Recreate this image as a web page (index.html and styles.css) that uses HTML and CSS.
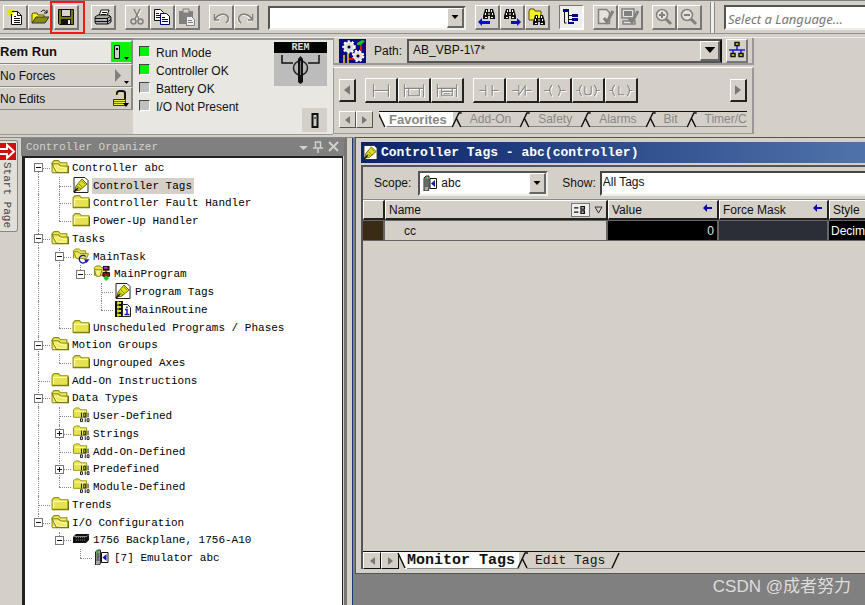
FILE: index.html
```html
<!DOCTYPE html>
<html lang="en">
<head>
<meta charset="utf-8">
<title>Controller abc</title>
<link rel="stylesheet" href="styles.css">
</head>
<body>
<svg class="defs" aria-hidden="true">
  <symbol id="fopen" viewBox="0 0 17 14"><path d="M1 12V3l2-2h4l2 2h6v3" fill="#f0ec60" stroke="#8c8c10"/><path d="M1 4l4 8h11V6H9L7 4z" fill="#eeea66" stroke="#85850c"/><path d="M3 6l3 5M6 6l9 3M7 11h8" stroke="#fffcb0"/><path d="M1 12.5h15.5V6" fill="none" stroke="#6f6f08"/></symbol>
  <symbol id="fclosed" viewBox="0 0 17 14"><path d="M1 12V3l2-2h4l2 2h7v9z" fill="#e6e252" stroke="#92920f"/><path d="M2 4.500h13M2.500 5v6" stroke="#fffcae"/><path d="M1 12.500h15.500V4" fill="none" stroke="#6f6f08"/></symbol>
  <symbol id="fdata" viewBox="0 0 18 17"><path d="M1 11V3l2-2h4l2 2h6v8z" fill="#e6e252" stroke="#92920f"/><path d="M2 4.500h12" stroke="#fffcae"/><path d="M9.500 6v5M12 6.500h2v4h-2zM16.500 6v5M8.500 12.500h2v3h-2zM13.500 12v4M15.500 12.500h2v3h-2z" fill="none" stroke="#111"/></symbol>
  <symbol id="ftask" viewBox="0 0 18 17"><path d="M1 11V3l2-2h4l2 2h5v3" fill="#e6e252" stroke="#92920f"/><path d="M1 4l3 7h11l2-5H8L6 4z" fill="#eeea66" stroke="#85850c"/><path d="M14 9a4 4 0 1 0 1 4" fill="none" stroke="#1a1a9c" stroke-width="1.500"/><path d="M12 12h6l-3 4z" fill="#1a1a9c"/></symbol>
  <symbol id="fprog" viewBox="0 0 18 17"><path d="M1 11V3l2-2h4l2 2h5v8z" fill="#e6e252" stroke="#85850c"/><path d="M1 5h8l-2 7H3z" fill="#f2ef80" stroke="#85850c"/><path d="M10 1h7v5h-7z" fill="#111"/><path d="M11 2h4v2h-4z" fill="#e01fe0"/><path d="M13 6v3M10 8h7v4h-7z" fill="#a01010" stroke="#111"/><path d="M13.500 11l3 3-3 3-3-3z" fill="#15d015"/></symbol>
  <symbol id="tag" viewBox="0 0 16 16"><path d="M1 .5h11l3 3v12H1z" fill="#fff" stroke="#222"/><path d="M2 14l1-5 6-7 5 5-7 6z" fill="#dede20" stroke="#66660a"/><path d="M6 7l4 4M4 9l4 3M9 4l3 3" stroke="#8c8c10"/><path d="M1 15l4-4" stroke="#111" stroke-width="1.500"/></symbol>
  <symbol id="routine" viewBox="0 0 16 16"><path d="M0 0h8v16H0z" fill="#111"/><path d="M2 1h4v2H2zM2 5h4v2H2zM2 9h4v2H2zM2 13h4v2H2z" fill="#d8d820"/><path d="M3 0v16" stroke="#d8d820"/><path d="M7.500 3.500h5l3 3v9h-8z" fill="#fff" stroke="#222"/><path d="M10 8.500h2V13M9.500 13.500h5M12 5.500V7" stroke="#1717c8" stroke-width="1.500" fill="none"/></symbol>
  <symbol id="rack" viewBox="0 0 18 12"><path d="M1 10V4l3-3h13v6l-3 3z" fill="#111"/><path d="M4 4.500h10M4 7h9" stroke="#777" stroke-dasharray="1 1"/><path d="M2 3.500h13l2-2" stroke="#888" fill="none"/></symbol>
  <symbol id="module" viewBox="0 0 15 16"><path d="M1 3l2-2h3v13l-1 2H1z" fill="#aaa" stroke="#222"/><path d="M2 5h3M2 7h3M2 9h3M2 11h3" stroke="#222"/><path d="M2 2h2v2H2z" fill="#17c317"/><path d="M7 3.500h6.500v10H7z" fill="#fff" stroke="#111"/><path d="M12 5v7L8 8.500z" fill="#1717a8"/></symbol>
  <symbol id="new" viewBox="0 0 18 18"><path d="M5.500 3.500h6l4 4v9h-10z" fill="#fff" stroke="#111"/><path d="M11.500 3.500v4h4M8 8.500h2M8 10.500h6M8 12.500h6M8 14.500h6" fill="none" stroke="#111"/><path d="M4.500 1v7M1 4.500h7M2 2l5 5M7 2L2 7" stroke="#e0dc00"/></symbol>
  <symbol id="open" viewBox="0 0 18 18"><path d="M1 15V6l1-1h4l1 2h6v3" fill="#f4f020" stroke="#555500"/><path d="M1 15l4-6h13l-4 6z" fill="#8a8a10" stroke="#333"/><path d="M10 4c2-3 4-2 6 1M16 2v3h-3" stroke="#111" fill="none"/></symbol>
  <symbol id="save" viewBox="0 0 18 18"><path d="M1.500 1.500h15v15h-14l-1-1z" fill="#77770c" stroke="#111"/><path d="M4.500 1.500h9v7h-9z" fill="#d8d5ce" stroke="#111"/><path d="M4 11h10v6H4z" fill="#111"/><path d="M11 12h2v4h-2z" fill="#eee"/></symbol>
  <symbol id="print" viewBox="0 0 18 18"><path d="M5 8l2-6h8l-2 6" fill="#fff" stroke="#111"/><path d="M8 4.500h5M7 6.500h5" stroke="#111"/><path d="M1 9l3-2h11l2 2v5l-3 2H2l-1-2z" fill="#aaa" stroke="#111"/><path d="M1 10.500h12l3-2M1 13.500h13l3-2M13.500 10v6" fill="none" stroke="#111"/><path d="M9 11h3v1H9z" fill="#e6e020"/></symbol>
  <symbol id="cut" viewBox="0 0 18 18"><g fill="none" stroke="#fff" transform="translate(1 1)"><path d="M6 1l5 10M12 1l-5 10"/></g><g fill="none" stroke="#808080" stroke-width="1.500"><path d="M6 1l5 10M12 1l-5 10"/><circle cx="5.500" cy="13.500" r="2.500"/><circle cx="12.500" cy="13.500" r="2.500"/></g></symbol>
  <symbol id="copy" viewBox="0 0 18 18"><path d="M1.500 1.500h6l3 3v8h-9z" fill="#fff" stroke="#111"/><path d="M3 5.500h3M3 7.500h5M3 9.500h5" stroke="#111"/><path d="M7.500 5.500h6l3 3v8h-9z" fill="#fff" stroke="#00007c"/><path d="M9 9.500h3M9 11.500h6M9 13.500h6" stroke="#00007c"/></symbol>
  <symbol id="paste" viewBox="0 0 18 18"><path d="M1 3h14v13H1z" fill="#808080"/><path d="M5 1h6v4H5z" fill="#d4d0c8" stroke="#808080"/><path d="M8.500 8.500h5l3 3v6h-8z" fill="#eee" stroke="#808080"/><path d="M10 12.500h4M10 14.500h5" stroke="#808080"/></symbol>
  <symbol id="undo" viewBox="0 0 18 18"><path d="M2 12h5M2.500 12V6M3 11c4-6 11-6 13-2 1 3 0 4-2 6" fill="none" stroke="#fff" transform="translate(1 1)"/><path d="M2 12h5M2.500 12V6M3 11c4-6 11-6 13-2 1 3 0 4-2 6" fill="none" stroke="#808080" stroke-width="1.500"/></symbol>
  <symbol id="bino" viewBox="0 0 12 12"><path d="M2 1h3v3h2V1h3l2 7v3H7V8H5v3H0V8z" fill="#111"/><path d="M3.500 2v2M8.500 2v2M2 9.500h2M8 9.500h2M6 5v2M2.500 5v2M9.500 5v2" stroke="#fff"/></symbol>
  <symbol id="findp" viewBox="0 0 18 18"><use href="#bino" x="5" width="12" height="12"/><path d="M0 14l4-4v3h8v3H4v2z" fill="#0808d8"/></symbol>
  <symbol id="findn" viewBox="0 0 18 18"><use href="#bino" x="1" width="12" height="12"/><path d="M18 14l-4-4v3H8v3h6v2z" fill="#0808d8"/></symbol>
  <symbol id="findf" viewBox="0 0 18 18"><path d="M1 12V3l1-2h4l1 2h6v9z" fill="#f4f020" stroke="#555500"/><use href="#bino" x="5" y="6" width="12" height="12"/></symbol>
  <symbol id="treeic" viewBox="0 0 18 18"><path d="M6.500 3v12M6.500 7.500h4M6.500 11.500h4M6.500 15h3M2.500 3v12h2" fill="none" stroke="#111"/><path d="M1 1h6v3H1zM10 6h6v3h-6zM10 10h6v3h-6zM6 14h6v2H6z" fill="#00008c"/></symbol>
  <symbol id="verify1" viewBox="0 0 18 18"><path d="M2.500 1.500h8l3 3v11h-11z" fill="#e5e2dc" stroke="#808080" stroke-width="1.500"/><path d="M8 10l3 4 6-11" fill="none" stroke="#808080" stroke-width="3"/></symbol>
  <symbol id="verify2" viewBox="0 0 18 18"><path d="M1 1h12v9H1zM2 13h12v3H2z" fill="#e5e2dc" stroke="#808080" stroke-width="1.500"/><path d="M3 3h8v5H3z" fill="#808080"/><path d="M8 10l3 4 6-11" fill="none" stroke="#808080" stroke-width="3"/></symbol>
  <symbol id="zin" viewBox="0 0 18 18"><circle cx="7" cy="7" r="5.500" fill="#e5e2dc" stroke="#808080" stroke-width="1.500"/><path d="M4 7h6M7 4v6" stroke="#808080" stroke-width="2"/><path d="M11 11l5 5" stroke="#808080" stroke-width="3"/></symbol>
  <symbol id="zout" viewBox="0 0 18 18"><circle cx="7" cy="7" r="5.500" fill="#e5e2dc" stroke="#808080" stroke-width="1.500"/><path d="M4 7h6" stroke="#808080" stroke-width="2"/><path d="M11 11l5 5" stroke="#808080" stroke-width="3"/></symbol>
  <symbol id="down" viewBox="0 0 7 4"><path d="M0 0h7L3.500 4z"/></symbol>
  <symbol id="left" viewBox="0 0 5 8"><path d="M5 0v8L0 4z"/></symbol>
  <symbol id="right" viewBox="0 0 5 8"><path d="M0 0v8l5-4z"/></symbol>
  <symbol id="back" viewBox="0 0 9 8"><path d="M0 4l4-4v3h5v2H4v3z" fill="#0808b8"/></symbol>
  <symbol id="cross" viewBox="0 0 12 17"><path d="M1 16L8 1h3M5 6l5 10" fill="none" stroke="#111" stroke-width="1.500"/></symbol>
  <symbol id="bslash" viewBox="0 0 10 17"><path d="M0 0h10v17H8z" fill="#fff"/><path d="M1 1l7 15" fill="none" stroke="#111" stroke-width="1.500"/></symbol>
  <symbol id="slash" viewBox="0 0 10 17"><path d="M1 16L8 1" fill="none" stroke="#111" stroke-width="1.500"/></symbol>
</svg>

<header class="toolbar">
  <div class="group">
    <button class="tb" aria-label="New"><svg><use href="#new"/></svg></button>
    <button class="tb" aria-label="Open"><svg><use href="#open"/></svg></button>
    <span class="marked"><button class="tb" aria-label="Save"><svg><use href="#save"/></svg></button></span>
  </div>
  <div class="group"><button class="tb" aria-label="Print"><svg><use href="#print"/></svg></button></div>
  <div class="group">
    <button class="tb" aria-label="Cut"><svg><use href="#cut"/></svg></button>
    <button class="tb" aria-label="Copy"><svg><use href="#copy"/></svg></button>
    <button class="tb" aria-label="Paste"><svg><use href="#paste"/></svg></button>
  </div>
  <div class="group">
    <button class="tb" aria-label="Undo"><svg><use href="#undo"/></svg></button>
    <button class="tb flip" aria-label="Redo"><svg><use href="#undo"/></svg></button>
  </div>
  <div class="combo search"><select aria-label="Find"><option></option></select><span class="arrow"><svg><use href="#down"/></svg></span></div>
  <div class="group">
    <button class="tb" aria-label="Find previous"><svg><use href="#findp"/></svg></button>
    <button class="tb" aria-label="Find next"><svg><use href="#findn"/></svg></button>
    <button class="tb" aria-label="Find in folder"><svg><use href="#findf"/></svg></button>
  </div>
  <div class="group"><button class="tb pressed" aria-label="Organizer"><svg><use href="#treeic"/></svg></button></div>
  <div class="group">
    <button class="tb" aria-label="Verify routine"><svg><use href="#verify1"/></svg></button>
    <button class="tb" aria-label="Verify controller"><svg><use href="#verify2"/></svg></button>
  </div>
  <div class="group">
    <button class="tb" aria-label="Zoom in"><svg><use href="#zin"/></svg></button>
    <button class="tb" aria-label="Zoom out"><svg><use href="#zout"/></svg></button>
  </div>
  <div class="divider"></div>
  <input class="language" type="text" placeholder="Select a Language..." aria-label="Language">
</header>

<section class="online">
  <div class="states">
    <div class="state run"><span>Rem Run</span><button class="mode" aria-label="Mode menu"><svg viewBox="0 0 18 18"><path d="M2.500 2.500h5v13h-5z" fill="#ccc" stroke="#111"/><path d="M4 5h2v2H4z"/><path d="M12 14h5l-2.500 3z"/></svg></button></div>
    <div class="state"><span>No Forces</span><button aria-label="Forces menu"><svg viewBox="0 0 18 18"><path d="M3 2v13l6-6.500z" fill="#808080"/><path d="M12 14h5l-2.500 3z"/></svg></button></div>
    <div class="state"><span>No Edits</span><button aria-label="Edits menu"><svg viewBox="0 0 18 18"><path d="M5 5V3q0-2 3-2h2q3 0 3 2v6" fill="none" stroke="#111" stroke-width="2"/><path d="M6 5V3.500h5V9" fill="none" stroke="#e8e430"/><path d="M1.500 9.500h12v6h-12z" fill="#f0ec30" stroke="#333"/><path d="M2 11.500h11M2 13.500h11" stroke="#77770c"/><path d="M11 13h6l-3 4z"/></svg></button></div>
  </div>
  <div class="status">
    <ul class="leds">
      <li><i class="led on"></i>Run Mode</li>
      <li><i class="led on"></i>Controller OK</li>
      <li><i class="led"></i>Battery OK</li>
      <li><i class="led"></i>I/O Not Present</li>
    </ul>
    <div class="keys">
      <div class="keyswitch"><b>REM</b><svg viewBox="0 0 53 33"><path d="M8 2v8h11M45 2v8H34" fill="none" stroke="#111" stroke-width="1.500"/><circle cx="26.500" cy="15" r="7" fill="#b5b5b5" stroke="#222" stroke-width="1.500"/><path d="M24 6l2.500-3L29 6v23l-2.500 2-2.500-2z" fill="#111"/><path d="M26.500 8v14" stroke="#777"/></svg></div>
      <div class="mini"><svg viewBox="0 0 8 15"><path d="M1.500 1h5v13h-5z" fill="#ccc" stroke="#111" stroke-width="2"/><path d="M3.500 4h1v2h-1z"/></svg></div>
    </div>
  </div>
  <div class="right">
    <div class="pathbar">
      <svg class="gears" viewBox="0 0 27 24"><path d="M0 0h27v24H0z" fill="#0a0a80"/><circle cx="10" cy="8" r="5.500" fill="#ddd" stroke="#fff" stroke-width="2.500" stroke-dasharray="2 2"/><circle cx="10" cy="8" r="1.500"/><circle cx="19" cy="17" r="5" fill="#ddd" stroke="#fff" stroke-width="2.500" stroke-dasharray="2 2"/><circle cx="19" cy="17" r="1.500"/><path d="M18 4l5-3 3 1-4 4h-4z" fill="#17c317"/><path d="M22 6v6M10 20h5" stroke="#e01010" stroke-width="2"/><path d="M5 16v8M9 15v9" stroke="#e6d820" stroke-width="1.500"/></svg>
      <label for="path">Path:</label>
      <div class="combo path"><select id="path"><option>AB_VBP-1\7*</option></select><span class="arrow"><svg><use href="#down"/></svg></span></div>
      <button class="tb" aria-label="Who active"><svg viewBox="0 0 18 18"><path d="M9 5v4M1 9h16M5 9v3M13 9v3" stroke="#1717e8" stroke-width="1.500"/><path d="M7 1.500h4v3H7zM3 12.500h4v3H3zM11 12.500h4v3h-4z" fill="#e8e010" stroke="#111" stroke-width="1.500"/></svg></button>
    </div>
    <div class="instr">
      <div class="ibuttons">
        <button class="scroll" aria-label="Scroll left"><svg><use href="#left"/></svg></button>
        <div class="iset">
          <button aria-label="Rung"><svg viewBox="0 0 24 16"><path d="M5 2v12M19 2v12M5 8h14"/></svg></button>
          <button aria-label="Branch"><svg viewBox="0 0 24 16"><path d="M3 2v12M21 2v12M3 6h18M7 6v7h10V6"/></svg></button>
          <button aria-label="Branch level"><svg viewBox="0 0 24 16"><path d="M3 2v12M21 2v12M3 6h18M7 6v7h10V6M7 9h10M9 11h6"/></svg></button>
        </div>
        <div class="iset">
          <button aria-label="Examine on"><svg viewBox="0 0 24 16"><path d="M3 8h6M15 8h6M9 3v10M15 3v10"/></svg></button>
          <button aria-label="Examine off"><svg viewBox="0 0 24 16"><path d="M3 8h6M15 8h6M9 3v10M15 3v10M9 12l6-8"/></svg></button>
          <button aria-label="Output"><svg viewBox="0 0 24 16"><path d="M2 8h5M17 8h5M9 3q-4 5 0 10M15 3q4 5 0 10"/></svg></button>
          <button aria-label="Unlatch"><svg viewBox="0 0 24 16"><path d="M1 8h3M20 8h3M6 3q-4 5 0 10M18 3q4 5 0 10M9 4v6q0 2 3 2t3-2V4"/></svg></button>
          <button aria-label="Latch"><svg viewBox="0 0 24 16"><path d="M1 8h3M20 8h3M6 3q-4 5 0 10M18 3q4 5 0 10M10 4v8h5"/></svg></button>
        </div>
        <button class="scroll end" aria-label="Scroll right"><svg><use href="#right"/></svg></button>
      </div>
      <div class="itabs">
        <button class="step" aria-label="Previous tab"><svg><use href="#left"/></svg></button><button class="step" aria-label="Next tab"><svg><use href="#right"/></svg></button>
        <div class="strip">
          <svg class="edge white"><use href="#bslash"/></svg><a class="on" href="#">Favorites</a>
          <svg class="edge"><use href="#cross"/></svg><a href="#">Add-On</a>
          <svg class="edge"><use href="#cross"/></svg><a href="#">Safety</a>
          <svg class="edge"><use href="#cross"/></svg><a href="#">Alarms</a>
          <svg class="edge"><use href="#cross"/></svg><a href="#">Bit</a>
          <svg class="edge"><use href="#cross"/></svg><a href="#">Timer/Counter</a>
        </div>
      </div>
    </div>
  </div>
</section>

<main class="work">
  <aside class="rail"><button class="start"><svg viewBox="0 0 16 17"><path d="M0 0h16v17H0z" fill="#d01010"/><path d="M0 6h7V2l7 6.500L7 15v-4H0" fill="none" stroke="#fff" stroke-width="2"/></svg><span>Start Page</span></button></aside>

  <section class="organizer">
    <h2><span>Controller Organizer</span>
      <svg viewBox="0 0 42 12"><path d="M17.500 1h5v6h-5zM15 7h10M20 7v5" fill="none" stroke="#d4d0c8" stroke-width="1.500"/><path d="M1 5h9L5.500 9z" fill="#d4d0c8"/><path d="M31 1l9 9M40 1l-9 9" stroke="#d4d0c8" stroke-width="2"/></svg></h2>
    <ul class="tree">
      <li><i class="t first"><b></b></i><svg><use href="#fopen"/></svg><span>Controller abc</span></li>
      <li><i class="v"></i><i class="t"></i><svg><use href="#tag"/></svg><span class="sel">Controller Tags</span></li>
      <li><i class="v"></i><i class="t"></i><svg><use href="#fclosed"/></svg><span>Controller Fault Handler</span></li>
      <li><i class="v"></i><i class="l"></i><svg><use href="#fclosed"/></svg><span>Power-Up Handler</span></li>
      <li><i class="t"><b></b></i><svg><use href="#fopen"/></svg><span>Tasks</span></li>
      <li><i class="v"></i><i class="t"><b></b></i><svg><use href="#ftask"/></svg><span>MainTask</span></li>
      <li><i class="v"></i><i class="v"></i><i class="l"><b></b></i><svg><use href="#fprog"/></svg><span>MainProgram</span></li>
      <li><i class="v"></i><i class="v"></i><i></i><i class="t"></i><svg><use href="#tag"/></svg><span>Program Tags</span></li>
      <li><i class="v"></i><i class="v"></i><i></i><i class="l"></i><svg><use href="#routine"/></svg><span>MainRoutine</span></li>
      <li><i class="v"></i><i class="l"></i><svg><use href="#fclosed"/></svg><span>Unscheduled Programs / Phases</span></li>
      <li><i class="t"><b></b></i><svg><use href="#fopen"/></svg><span>Motion Groups</span></li>
      <li><i class="v"></i><i class="l"></i><svg><use href="#fclosed"/></svg><span>Ungrouped Axes</span></li>
      <li><i class="t"></i><svg><use href="#fclosed"/></svg><span>Add-On Instructions</span></li>
      <li><i class="t"><b></b></i><svg><use href="#fopen"/></svg><span>Data Types</span></li>
      <li><i class="v"></i><i class="t"></i><svg><use href="#fdata"/></svg><span>User-Defined</span></li>
      <li><i class="v"></i><i class="t"><b class="plus"></b></i><svg><use href="#fdata"/></svg><span>Strings</span></li>
      <li><i class="v"></i><i class="t"></i><svg><use href="#fdata"/></svg><span>Add-On-Defined</span></li>
      <li><i class="v"></i><i class="t"><b class="plus"></b></i><svg><use href="#fdata"/></svg><span>Predefined</span></li>
      <li><i class="v"></i><i class="l"></i><svg><use href="#fdata"/></svg><span>Module-Defined</span></li>
      <li><i class="t"></i><svg><use href="#fclosed"/></svg><span>Trends</span></li>
      <li><i class="l"><b></b></i><svg><use href="#fopen"/></svg><span>I/O Configuration</span></li>
      <li><i></i><i class="l"><b></b></i><svg><use href="#rack"/></svg><span>1756 Backplane, 1756-A10</span></li>
      <li><i></i><i></i><i class="l"></i><svg><use href="#module"/></svg><span>[7] Emulator abc</span></li>
    </ul>
  </section>

  <section class="mdi">
    <article class="window">
      <h1><svg><use href="#tag"/></svg>Controller Tags - abc(controller)</h1>
      <div class="client">
        <div class="filters">
          <label for="scope">Scope:</label>
          <div class="combo scope"><svg class="lead"><use href="#module"/></svg><select id="scope"><option>abc</option></select><span class="arrow"><svg><use href="#down"/></svg></span></div>
          <label for="show">Show:</label>
          <input id="show" type="text" value="All Tags">
        </div>
        <div class="sheet">
          <table>
            <colgroup><col class="c-sel"><col class="c-name"><col class="c-val"><col class="c-force"><col></colgroup>
            <thead><tr>
              <th></th>
              <th><div>Name<span class="tools"><svg class="view" viewBox="0 0 19 14"><path d="M2 4.500h5M2 9.500h5M10 3h4v3h-4zM10 8h4v3h-4z" fill="none" stroke="#111" stroke-width="1.500"/></svg><svg class="sort" viewBox="0 0 9 8"><path d="M1 1h7L4.500 7z" fill="none" stroke="#333"/></svg></span></div></th>
              <th><div>Value<svg class="ar"><use href="#back"/></svg></div></th>
              <th><div>Force Mask<svg class="ar"><use href="#back"/></svg></div></th>
              <th><div>Style</div></th>
            </tr></thead>
            <tbody><tr><td class="mark"></td><td class="name">cc</td><td class="val">0</td><td class="force"></td><td class="style">Decimal</td></tr></tbody>
          </table>
        </div>
        <div class="tabs">
          <button class="step" aria-label="Previous sheet"><svg><use href="#left"/></svg></button><button class="step" aria-label="Next sheet"><svg><use href="#right"/></svg></button>
          <svg class="edge white"><use href="#bslash"/></svg><a class="on" href="#">Monitor Tags</a><svg class="edge"><use href="#cross"/></svg><a href="#">Edit Tags</a><svg class="edge"><use href="#slash"/></svg>
        </div>
      </div>
    </article>
    <p class="credit">CSDN @成者努力</p>
  </section>
</main>
</body>
</html>
```
FILE: styles.css
```css
* { box-sizing: border-box; }
html, body { height: 100%; }
body {
  margin: 0;
  display: flex;
  flex-direction: column;
  overflow: hidden;
  background: #d4d0c8;
  color: #111;
  font: 12px/16px "Liberation Sans", sans-serif;
}
button, input, select { font: inherit; color: inherit; margin: 0; padding: 0; border-radius: 0; }
button { background: #d4d0c8; border: 0; display: flex; align-items: center; justify-content: center; flex: none; }
svg { flex: none; display: block; }
ul { list-style: none; margin: 0; padding: 0; }
a { color: inherit; text-decoration: none; }
.defs { position: absolute; width: 0; height: 0; }

/* Main toolbar */
.toolbar {
  flex: none;
  display: flex;
  align-items: center;
  gap: 9px;
  height: 34px;
  padding: 1px 0 0 3px;
  border-top: 1px solid #808080;
  border-bottom: 1px solid #909090;
}
.group { display: flex; }
.tb {
  width: 25px;
  height: 25px;
  border: solid;
  border-width: 1px 2px 2px 1px;
  border-color: #fff #777 #777 #fff;
}
.tb svg { width: 18px; height: 18px; }
.tb.pressed { background: #efedea; border-color: #777 #fff #fff #777; }
.flip svg { transform: scaleX(-1); }
.marked { display: flex; outline: 2px solid #f01818; outline-offset: 1px; padding: 1px 3px 1px 1px; margin: -1px 0; }
.combo { position: relative; display: flex; border: 2px solid; border-color: #555 #eee #eee #555; background: #fff; }
.combo select { appearance: none; border: 0; background: transparent; flex: 1; min-width: 0; outline: 0; }
.arrow {
  position: absolute;
  top: 0; right: 0; bottom: 0;
  width: 17px;
  display: flex;
  align-items: center;
  justify-content: center;
  background: #d4d0c8;
  border: solid;
  border-width: 1px 2px 2px 1px;
  border-color: #fff #666 #666 #fff;
  pointer-events: none;
}
.arrow svg { width: 8px; height: 4px; }
.search { width: 198px; height: 24px; }
.divider { width: 5px; height: 31px; border-left: 1px solid #888; border-right: 1px solid #888; background: #eee; margin-left: -1px; }
.language {
  flex: 1;
  min-width: 0;
  height: 25px;
  border: 2px solid;
  border-color: #555 #eee #eee #555;
  border-right: 0;
  background: #fff;
  padding: 3px 2px 0;
  font: italic 13px/18px "Noto Sans", sans-serif;
}
.language::placeholder { color: #777; opacity: 1; }

/* Online bar */
.online {
  flex: none;
  display: flex;
  height: 100px;
  margin-top: 3px;
  border-top: 1px solid #eee;
}
.states { width: 133px; border-top: 2px solid #888; flex: none; height: 97px; border-bottom: 1px solid #999; }
.state { display: flex; align-items: center; justify-content: space-between; height: 23px; border: solid #888; border-width: 0 2px 1px 0; border-top: 1px solid #eee; }
.state.run { background: #e8e7e2; font-weight: bold; font-size: 13px; height: 24px; }
.state button { width: 20px; height: 20px; background: none; }
.state svg { width: 18px; height: 18px; }
.state .mode { background: #0cf20c; }
.status {
  flex: none;
  width: 200px;
  height: 97px;
  display: flex;
  justify-content: space-between;
  padding: 1px 6px 2px;
  background: #e8e7e2;
  border-top: 2px solid #999;
  border-bottom: 1px solid #999;
}
.leds { padding-top: 3px; }
.leds li { display: flex; align-items: center; gap: 6px; height: 18px; }
.led { width: 11px; height: 11px; background: #c0c0c0; border: 1px solid; border-color: #444 #fff #fff #444; margin-bottom: 3px; }
.led.on { background: #00f20c; }
.keys { display: flex; flex-direction: column; align-items: flex-end; justify-content: space-between; margin-left: -40px; }
.keyswitch { width: 53px; background: #bcbcbc; margin-top: 1px; }
.keyswitch b { display: block; background: #000; color: #ddd; font: bold 10px/11px "Liberation Mono", monospace; text-align: center; }
.keyswitch svg { width: 53px; height: 33px; }
.mini { width: 25px; height: 24px; background: #d4d0c8; display: flex; align-items: center; justify-content: center; }
.mini svg { width: 8px; height: 15px; }
.right { width: 421px; flex: none; }
.pathbar {
  display: flex;
  align-items: center;
  height: 27px;
  padding: 0 4px 0 5px;
  border: solid #999;
  border-width: 0 2px 2px 1px;
}
.gears { width: 27px; height: 24px; }
.pathbar label { margin: 0 5px 0 8px; }
.path { flex: 1; height: 24px; background: #d4d0c8; border-right-color: #111; border-bottom-color: #555; margin-right: 4px; }
.path select { padding: 0 0 2px 4px; }
.path .arrow { width: 20px; }
.path .arrow svg { width: 12px; height: 6px; }
.pathbar .tb { width: 22px; height: 24px; }
.instr { height: 67px; margin-top: 2px; border: 1px solid #999; border-top-color: #fff; border-right-width: 2px; padding: 10px 5px 5px 5px; display: flex; flex-direction: column; justify-content: space-between; }
.ibuttons { display: flex; gap: 9px; align-items: center; }
.ibuttons button { height: 25px; border: solid; border-width: 1px 2px 2px 1px; border-color: #fff #222 #222 #fff; }
.ibuttons .scroll { width: 17px; height: 23px; fill: #777; }
.scroll svg { width: 6px; height: 10px; }
.scroll.end { margin-left: auto; }
.iset { display: flex; }
.iset button { width: 33px; }
.iset svg { width: 26px; height: 17px; fill: none; stroke: #858585; filter: drop-shadow(1px 1px 0 #fff); }
.itabs { display: flex; height: 17px; }
.step { width: 17px; height: 17px; border: 1px solid; border-color: #fff #555 #555 #fff; fill: #777; }
.step svg { width: 5px; height: 8px; }
.strip { display: flex; flex: 1; min-width: 0; overflow: hidden; border-top: 1px solid #111; margin-left: 6px; color: #888; }
.edge { width: 12px; height: 17px; }
.edge.white { width: 10px; }
.strip a { padding: 0 10px 0 9px; height: 15px; line-height: 15px; border-bottom: 1px solid #888; white-space: nowrap; }
.strip .on { background: #fff; font-weight: bold; font-size: 13px; padding: 0 6px 0 4px; }
.strip .edge { margin: 0 -2px; position: relative; height: 16px; }

/* Work area */
.work { flex: 1; min-height: 0; display: flex; border-top: 1px solid #888; }
.rail { width: 21px; flex: none; padding-top: 2px; }
.start { flex-direction: column; justify-content: flex-start; align-items: flex-start; width: 18px; height: 92px; border: 1px solid #888; border-left: 0; border-radius: 0 3px 3px 0; background: #e2dfd9; padding-top: 2px; color: #444; }
.start svg { width: 16px; height: 17px; }
.start span { writing-mode: vertical-rl; font: 11px/14px "Liberation Mono", monospace; margin-top: 2px; }
.organizer { width: 326px; flex: none; display: flex; flex-direction: column; border-right: 3px solid #777; }
.organizer h2 {
  display: flex;
  align-items: center;
  justify-content: space-between;
  margin: 0;
  height: 18px;
  padding: 0 4px 0 5px;
  background: #808080;
  color: #d4d0c8;
  font: 11px/16px "Liberation Mono", monospace;
}
.organizer h2 svg { width: 42px; height: 12px; }
.tree {
  flex: 1;
  min-height: 0;
  display: grid;
  grid-template-rows: repeat(23, minmax(0, 1fr));
  background: #fff;
  margin: 0 1px;
  border: solid #222;
  border-width: 2px 1px 0 3px;
  padding: 1px 0 38px 3px;
  color: #000;
  font: 11px/16px "Liberation Mono", monospace;
}
.tree li { display: flex; align-items: center; white-space: pre; }
.tree i { position: relative; width: 21px; align-self: stretch; display: flex; align-items: center; justify-content: center; flex: none; }
.tree i::before { content: ""; position: absolute; left: 10px; top: 0; bottom: 0; border-left: 1px dotted #888; }
.tree i:not([class])::before { display: none; }
.tree .l::before { bottom: 50%; }
.tree .first::before { top: 50%; }
.tree .t::after, .tree .l::after { content: ""; position: absolute; left: 10px; right: -1px; top: 50%; border-top: 1px dotted #888; }
.tree b {
  position: relative;
  z-index: 1;
  width: 9px;
  height: 9px;
  border: 1px solid #777;
  background: linear-gradient(#111, #111) center / 5px 1px no-repeat, #fff;
}
.tree .plus { background: linear-gradient(#111, #111) center / 5px 1px no-repeat, linear-gradient(#111, #111) center / 1px 5px no-repeat, #fff; }
.tree svg { width: 18px; height: 16px; margin: 0 1px 2px 2px; position: relative; }
.tree span { padding: 0 2px 0 1px; margin-left: 1px; }
.tree .sel { background: #d4d0c8; }

/* Document window */
.mdi { position: relative; flex: 1; min-width: 0; margin-left: 5px; display: flex; background: #808080; border-left: 1px solid #173a80; }
.window { flex: 1; min-width: 0; margin: 0 0 32px 3px; display: flex; flex-direction: column; border: solid #d4d0c8; border-width: 4px 0 4px 5px; outline: 1px solid #555; background: #d4d0c8; }
.window h1 {
  display: flex;
  align-items: center;
  gap: 3px;
  margin: 0;
  flex: none;
  height: 21px;
  padding-left: 2px;
  background: linear-gradient(90deg, #0a246a, #5073ab);
  color: #fff;
  font: bold 13px/20px "Liberation Mono", monospace;
  white-space: nowrap;
  overflow: hidden;
}
.window h1 svg { width: 15px; height: 15px; }
.client { flex: 1; min-height: 0; display: flex; flex-direction: column; margin-top: 2px; border: solid #555; border-width: 2px 0 0 2px; }
.filters { display: flex; align-items: center; height: 32px; padding-left: 11px; flex: none; }
.filters label { margin-right: 7px; }
.scope { width: 130px; height: 25px; margin-right: 14px; align-items: center; }
.scope .lead { width: 15px; height: 16px; margin: 0 3px; }
.filters input { flex: 1; min-width: 0; height: 25px; border: 2px solid; border-color: #444 #eee #eee #444; border-right: 0; padding: 0 1px 2px; background: #fff; margin-left: -3px; }
.sheet { flex: 1; min-height: 0; overflow: hidden; }
table { width: 100%; table-layout: fixed; border-collapse: separate; border-spacing: 0; border-top: 1px solid #888; }
.c-sel { width: 22px; }
.c-name { width: 223px; }
.c-val { width: 111px; }
.c-force { width: 110px; }
th, td { padding: 0 3px; height: 20px; text-align: left; font-weight: normal; white-space: nowrap; overflow: hidden; }
th { border: solid; border-width: 1px 2px 2px 1px; border-color: #fff #222 #222 #fff; }
th:last-child { border-right: 0; }
th div { display: flex; align-items: center; justify-content: space-between; }
.tools { display: flex; align-items: center; gap: 4px; }
.view { width: 19px; height: 14px; background: #eee; border: 1px solid #777; }
.sort { width: 9px; height: 8px; }
.ar { width: 9px; height: 8px; margin-right: 2px; margin-bottom: 3px; }
td { height: 21px; border: solid #666; border-width: 1px 2px 1px 0; }
.mark { background: #3a2c14; }
.name { padding-left: 19px; }
.val { background: #000; color: #dce6ee; text-align: right; }
.force { background: #2b2e37; }
.style { background: #000; color: #fff; padding: 0 2px; border-right: 0; text-overflow: clip; }
.tabs { flex: none; display: flex; height: 18px; border-top: 1px solid #111; font: 13px/17px "Liberation Mono", monospace; }
.tabs .step { border-color: #fff #111 #111 #fff; width: 18px; }
.tabs .edge { margin: 0 -2px; position: relative; }
.tabs a { padding: 0 7px 0 8px; height: 17px; border-bottom: 1px solid #888; white-space: nowrap; }
.tabs .on { background: #fff; font-weight: bold; font-size: 15px; padding: 0 4px 0 2px; }
.credit { position: absolute; right: 14px; bottom: 8px; margin: 0; color: #ddd; font: 17px/20px "Liberation Sans", "Noto Sans CJK SC", sans-serif; }
```
